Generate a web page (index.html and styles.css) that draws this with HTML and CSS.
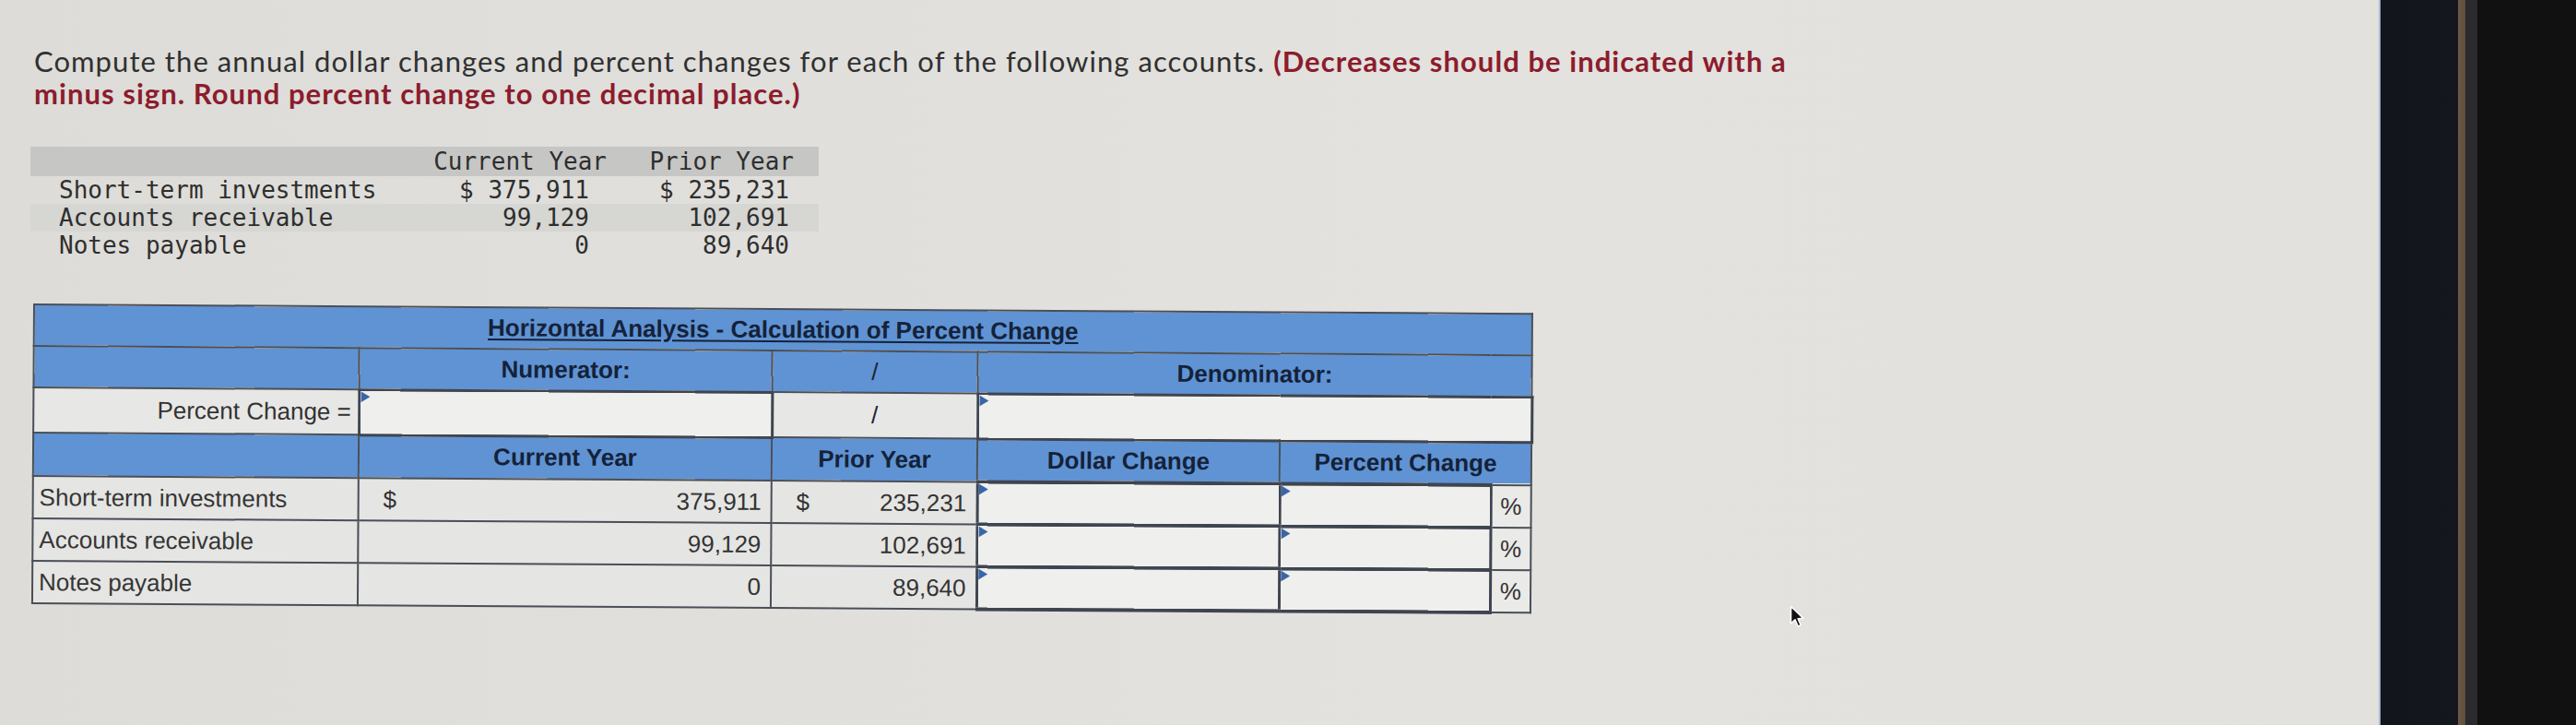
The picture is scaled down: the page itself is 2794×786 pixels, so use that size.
FILE: index.html
```html
<!DOCTYPE html>
<html lang="en">
<head>
<meta charset="utf-8">
<title>Horizontal Analysis</title>
<link rel="stylesheet" href="styles.css">
</head>
<body>
<div class="screen">
  <main class="page">
    <p class="intro">Compute the annual dollar changes and percent changes for each of the following accounts. <strong class="note">(Decreases should be indicated with a</strong> <strong class="note">minus sign. Round percent change to one decimal place.)</strong></p>

    <div class="data">
      <div class="data-row data-head">
        <span class="d-label"></span>
        <span class="d-cur">Current Year</span>
        <span class="d-pri">Prior Year</span>
      </div>
      <div class="data-row">
        <span class="d-label">Short-term investments</span>
        <span class="d-cur d-val">$ 375,911</span>
        <span class="d-pri d-val">$ 235,231</span>
      </div>
      <div class="data-row data-band">
        <span class="d-label">Accounts receivable</span>
        <span class="d-cur d-val">99,129</span>
        <span class="d-pri d-val">102,691</span>
      </div>
      <div class="data-row">
        <span class="d-label">Notes payable</span>
        <span class="d-cur d-val">0</span>
        <span class="d-pri d-val">89,640</span>
      </div>
    </div>

    <table class="calc">
      <colgroup>
        <col class="c1"><col class="c2"><col class="c3"><col class="c4"><col class="c5"><col class="c6">
      </colgroup>
      <tr class="r-title">
        <th colspan="6" class="hd"><span class="title">Horizontal Analysis - Calculation of Percent Change</span></th>
      </tr>
      <tr class="r-num">
        <th class="hd"></th>
        <th class="hd">Numerator:</th>
        <th class="hd slash">/</th>
        <th class="hd" colspan="3">Denominator:</th>
      </tr>
      <tr class="r-input">
        <td class="lbl-right">Percent Change =</td>
        <td class="in"></td>
        <td class="slash-cell">/</td>
        <td class="in" colspan="3"></td>
      </tr>
      <tr class="r-head">
        <th class="hd"></th>
        <th class="hd">Current Year</th>
        <th class="hd">Prior Year</th>
        <th class="hd">Dollar Change</th>
        <th class="hd" colspan="2">Percent Change</th>
      </tr>
      <tr class="r-body">
        <td class="lbl">Short-term investments</td>
        <td class="amt"><span class="cur">$</span><span class="num">375,911</span></td>
        <td class="amt"><span class="cur">$</span><span class="num">235,231</span></td>
        <td class="in"></td>
        <td class="in"></td>
        <td class="pct">%</td>
      </tr>
      <tr class="r-body">
        <td class="lbl">Accounts receivable</td>
        <td class="amt"><span class="cur"></span><span class="num">99,129</span></td>
        <td class="amt"><span class="cur"></span><span class="num">102,691</span></td>
        <td class="in"></td>
        <td class="in"></td>
        <td class="pct">%</td>
      </tr>
      <tr class="r-body">
        <td class="lbl">Notes payable</td>
        <td class="amt"><span class="cur"></span><span class="num">0</span></td>
        <td class="amt"><span class="cur"></span><span class="num">89,640</span></td>
        <td class="in"></td>
        <td class="in"></td>
        <td class="pct">%</td>
      </tr>
    </table>

    <svg class="cursor" width="18" height="26" viewBox="0 0 18 26" aria-hidden="true">
      <path d="M1.5 1.5 L1.5 20 L6 15.8 L9.2 23 L12.2 21.7 L9.1 14.7 L15 14.4 Z" fill="#111" stroke="#fafafa" stroke-width="1.6" stroke-linejoin="round"/>
    </svg>
  </main>
  <div class="bezel"></div>
</div>
</body>
</html>
```

FILE: styles.css
```css
html, body {
  margin: 0;
  padding: 0;
}

body {
  background: #0f0f10;
  width: 2794px;
  height: 786px;
  overflow: hidden;
}

.screen {
  display: flex;
  width: 2794px;
  height: 786px;
}

.page {
  position: relative;
  width: 2580px;
  height: 786px;
  flex: none;
  box-sizing: border-box;
  padding: 49px 0 0 37px;
  background: linear-gradient(to right, #dddcd8 0%, #e3e2de 60%, #e2e1dd 100%);
  font-family: "Liberation Sans", Arial, sans-serif;
  color: #333;
}

.bezel {
  flex: 1;
  height: 786px;
  background: linear-gradient(to right,
    #a9bcd6 0, #a9bcd6 2px,
    #12151c 2px, #14171e 86px,
    #6b5843 86px, #5f4f3d 94px,
    #2b2a2e 94px, #2b2a2e 107px,
    #111112 107px);
}

.intro {
  margin: 0;
  width: 1975px;
  font-family: Lato, "Open Sans", sans-serif;
  font-size: 31px;
  letter-spacing: 1.05px;
  line-height: 35px;
  color: #303030;
}

.note {
  color: #8c1c2d;
  font-weight: 700;
}

/* given data block */
.data {
  margin: 40px 0 0 -4px;
  width: 855px;
  font-family: "DejaVu Sans Mono", monospace;
  font-size: 26px;
  color: #2e2e2e;
}

.data-row {
  display: grid;
  grid-template-columns: 417px 230px 208px;
  height: 30px;
  line-height: 30px;
}

.data-head {
  height: 32px;
  line-height: 32px;
  background: #c6c6c5;
}

.data-band {
  background: #d6d6d3;
}

.d-label {
  padding-left: 31px;
  white-space: pre;
}

.d-cur, .d-pri {
  text-align: right;
  white-space: pre;
}

.d-cur { padding-right: 22px; }
.d-pri { padding-right: 27px; }
.d-cur.d-val { padding-right: 41px; }
.d-pri.d-val { padding-right: 32px; }

/* calculation table */
.calc {
  margin: 48px 0 0 -1px;
  width: 1625px;
  table-layout: fixed;
  border-collapse: collapse;
  font-family: "Liberation Sans", Arial, sans-serif;
  font-size: 26px;
  transform: rotate(0.36deg);
  transform-origin: left top;
}

.c1 { width: 353px; }
.c2 { width: 448px; }
.c3 { width: 223px; }
.c4 { width: 328px; }
.c5 { width: 229px; }
.c6 { width: 44px; }

.calc th, .calc td {
  border: 2px solid #4a4f58;
  padding: 0;
  overflow: hidden;
  white-space: nowrap;
}

.hd {
  background: #6093d3;
  color: #14223a;
  font-weight: 700;
  text-align: center;
}

.r-title { height: 45px; }
.r-num { height: 45px; }
.r-input { height: 49px; }
.r-head { height: 47px; }
.r-body { height: 46px; }

.title {
  text-decoration: underline;
  text-underline-offset: 3px;
}

.slash {
  font-weight: 400;
  color: #1c2233;
}

.lbl-right {
  background: #e7e7e5;
  text-align: right;
  padding-right: 7px !important;
}

.slash-cell {
  background: #e7e7e5;
  text-align: center;
  color: #1c2233;
}

.in {
  position: relative;
  background: #efefed;
  border: 3px solid #3f4550 !important;
}

.r-body .in {
  border-top-width: 4px !important;
  border-bottom-width: 4px !important;
}

.in::before {
  content: "";
  position: absolute;
  left: 0;
  top: 0;
  border-left: 10px solid #3a66a8;
  border-top: 6px solid transparent;
  border-bottom: 6px solid transparent;
}

.lbl {
  background: #e5e5e3;
  padding-left: 6px !important;
  color: #353535;
}

.amt {
  background: #e5e5e3;
  color: #333;
  padding: 0 10px 0 26px !important;
}

.amt .cur {
  float: left;
}

.amt .num {
  float: right;
}

.pct {
  background: #eaeae8;
  text-align: center;
  color: #333;
}

.cursor {
  position: absolute;
  left: 1941px;
  top: 656px;
}
```
